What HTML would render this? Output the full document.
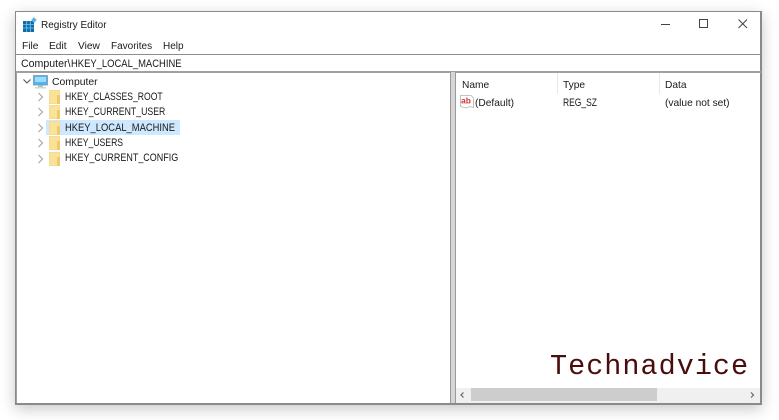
<!DOCTYPE html>
<html><head><meta charset="utf-8">
<style>
html,body{margin:0;padding:0;width:779px;height:420px;overflow:hidden;background:#fff}
body{position:relative;font-family:"Liberation Sans",sans-serif;color:#1a1a1a}
#win{position:absolute;left:15px;top:11px;width:747px;height:394px;box-sizing:border-box;border:1px solid #8a8a8a;border-right:2px solid #8a8a8a;border-bottom:2px solid #8a8a8a;background:#fff;box-shadow:0 4px 14px rgba(0,0,0,.22);}
.t{position:absolute;font-size:10px;line-height:14px;white-space:nowrap;filter:blur(.3px);transform-origin:0 50%}
.u{font-size:11px}
.l{position:absolute;background:#8c8c8c}
.folder{position:absolute;width:11px;height:14px;background:#fbe29a;border:1px solid #f6dc90;box-sizing:border-box}
.folder:after{content:"";position:absolute;right:-1px;bottom:-1px;width:3px;height:9px;background:#f0ca68}
svg{position:absolute;overflow:visible}
</style></head><body>
<div id="win"></div>

<svg style="left:23px;top:18px" width="14" height="14" viewBox="0 0 14 14">
<rect x="0" y="3" width="11" height="11" fill="#0f6cab"/>
<path d="M0 6.5H11M0 10H11M3.7 3V14M7.3 3V14" stroke="#7cc4ea" stroke-width=".8"/>
<rect x="9" y="0" width="4" height="4" fill="#5bb6e6" transform="rotate(45 11 2)"/>
</svg>
<div class="t" style="left:41px;top:19px">Registry Editor</div>

<svg style="left:600px;top:0" width="179" height="40" viewBox="0 0 179 40" fill="none" stroke="#444" stroke-width="1">
<path d="M61 24.5H70"/>
<rect x="99.5" y="19.5" width="8" height="8"/>
<path d="M138.5 19.5L147 28M147 19.5L138.5 28"/>
</svg>

<div class="t" style="left:22px;top:40px;font-size:10.2px">File</div>
<div class="t" style="left:49px;top:40px;font-size:10.2px">Edit</div>
<div class="t" style="left:78px;top:40px;font-size:10.2px">View</div>
<div class="t" style="left:111px;top:40px">Favorites</div>
<div class="t" style="left:163px;top:40px">Help</div>

<div class="l" style="left:16px;top:54px;width:745px;height:1px"></div>
<div class="t" style="left:21px;top:57px;font-size:10.6px">Computer\</div>
<div class="t u" style="left:71px;top:57px;transform:scaleX(.857)">HKEY_LOCAL_MACHINE</div>
<div class="l" style="left:16px;top:71px;width:745px;height:2px;background:#a0a0a0"></div>
<div style="position:absolute;left:16px;top:71px;width:1px;height:332px;background:#a0a0a0"></div>

<div style="position:absolute;left:451px;top:72px;width:4px;height:331px;background:#d6d6d6"></div>
<div class="l" style="left:455px;top:72px;width:1px;height:331px;background:#9a9a9a"></div>
<div class="l" style="left:450px;top:72px;width:1px;height:331px;background:#9a9a9a"></div>

<svg style="left:22px;top:78px" width="10" height="8" viewBox="0 0 10 8" fill="none" stroke="#555" stroke-width="1.1"><path d="M1.5 1.5L5 5L8.5 1.5"/></svg>
<svg style="left:33px;top:75px" width="16" height="15" viewBox="0 0 16 15">
<rect x="0.5" y="0.5" width="14" height="9.5" fill="#52b4ec" stroke="#7c98ac" stroke-width=".8"/>
<rect x="2" y="2" width="11" height="5" fill="#9ddcfa"/>
<rect x="5" y="10.5" width="5" height="1.5" fill="#b8c4cc"/>
<rect x="2" y="12" width="11" height="1.5" fill="#d0d6da"/>
</svg>
<div class="t" style="left:52px;top:76px;font-size:10.4px">Computer</div>

<div style="position:absolute;left:46px;top:120px;width:134px;height:15px;background:#cde8ff"></div>

<svg style="left:36px;top:90px" width="10" height="76" viewBox="0 0 10 76" fill="none" stroke="#a8a8a8" stroke-width="1.2">
<path d="M2.5 3L6.5 7L2.5 11M2.5 18L6.5 22L2.5 26M2.5 34L6.5 38L2.5 42M2.5 49L6.5 53L2.5 57M2.5 65L6.5 69L2.5 73"/>
</svg>
<div class="folder" style="left:49px;top:90px"></div>
<div class="folder" style="left:49px;top:105px"></div>
<div class="folder" style="left:49px;top:121px"></div>
<div class="folder" style="left:49px;top:136px"></div>
<div class="folder" style="left:49px;top:152px"></div>

<div class="t u" style="left:65px;top:90px;transform:scaleX(.783)">HKEY_CLASSES_ROOT</div>
<div class="t u" style="left:65px;top:105px;transform:scaleX(.793)">HKEY_CURRENT_USER</div>
<div class="t u" style="left:65px;top:121px;transform:scaleX(.853)">HKEY_LOCAL_MACHINE</div>
<div class="t u" style="left:65px;top:136px;transform:scaleX(.785)">HKEY_USERS</div>
<div class="t u" style="left:65px;top:151px;transform:scaleX(.816)">HKEY_CURRENT_CONFIG</div>

<div class="t" style="left:462px;top:79px;font-size:10.2px">Name</div>
<div class="t" style="left:563px;top:79px;font-size:10.2px">Type</div>
<div class="t" style="left:665px;top:79px;font-size:10.2px">Data</div>
<div style="position:absolute;left:557px;top:73px;width:1px;height:21px;background:#e8e8e8"></div>
<div style="position:absolute;left:659px;top:73px;width:1px;height:21px;background:#e8e8e8"></div>

<svg style="left:460px;top:95px" width="14" height="14" viewBox="0 0 14 14">
<path d="M.5 .5H11L13.5 3V12.5L10 11.5L6 13L.5 11.5Z" fill="#fff" stroke="#b0b0b0" stroke-width=".8"/>
<text x="1" y="8.5" font-family="Liberation Sans, sans-serif" font-size="8.5" font-weight="bold" fill="#d0342c">ab</text>
</svg>
<div class="t" style="left:475px;top:97px;font-size:10.2px">(Default)</div>
<div class="t u" style="left:563px;top:96px;transform:scaleX(.77)">REG_SZ</div>
<div class="t" style="left:665px;top:97px;font-size:10.2px">(value not set)</div>

<div style="position:absolute;left:550px;top:352px;font-family:'Liberation Mono',monospace;font-size:28.5px;line-height:30px;color:#4a0d0d;white-space:nowrap;letter-spacing:1px">Technadvice</div>

<div style="position:absolute;left:456px;top:388px;width:304px;height:15px;background:#f0f0f0"></div>
<div style="position:absolute;left:471px;top:388px;width:186px;height:13px;background:#cdcdcd"></div>
<svg style="left:455px;top:388px" width="305" height="14" viewBox="0 0 305 14" fill="none" stroke="#666" stroke-width="1.2">
<path d="M8.5 4.5L6 7L8.5 9.5M296 4.5L298.5 7L296 9.5"/>
</svg>
</body></html>
